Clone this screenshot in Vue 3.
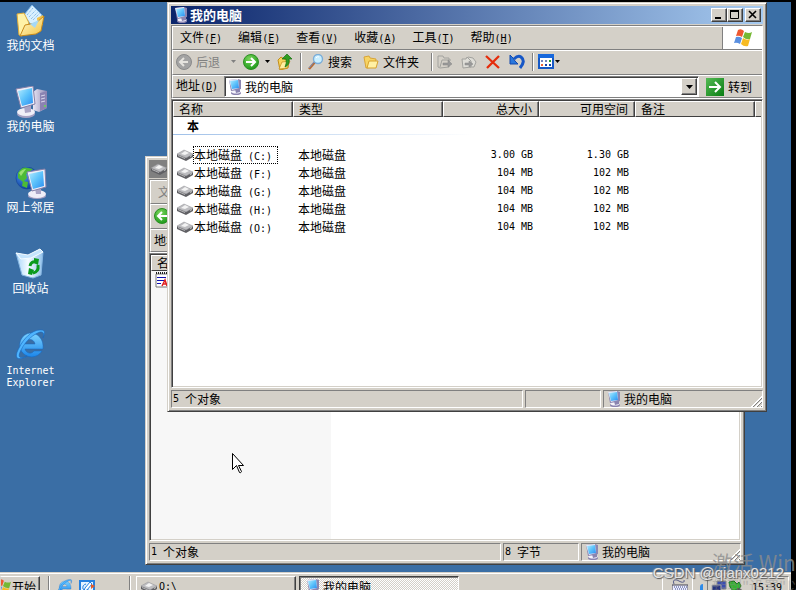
<script setup>
const shortcuts = [
  { icon: 'docs', label: '我的文档' },
  { icon: 'pc', label: '我的电脑' },
  { icon: 'net', label: '网上邻居' },
  { icon: 'bin', label: '回收站' },
  { icon: 'ie', label: 'Internet Explorer', latin: true },
]
const menus = [
  ['文件', 'F'], ['编辑', 'E'], ['查看', 'V'], ['收藏', 'A'], ['工具', 'T'], ['帮助', 'H'],
]
const disks = [
  { letter: 'C', size: '3.00 GB', free: '1.30 GB', focused: true },
  { letter: 'F', size: '104 MB', free: '102 MB' },
  { letter: 'G', size: '104 MB', free: '102 MB' },
  { letter: 'H', size: '104 MB', free: '102 MB' },
  { letter: 'O', size: '104 MB', free: '102 MB' },
]
</script>

<template>
  <svg class="sprite" aria-hidden="true">
    <defs>
      <linearGradient id="gScreen" x1="0" y1="0" x2="1" y2="1">
        <stop offset="0" stop-color="#b4ecff" /><stop offset=".5" stop-color="#5cc2fb" /><stop offset="1" stop-color="#2b8cf0" />
      </linearGradient>
      <linearGradient id="gFolder" x1="0" y1="0" x2="1" y2="1">
        <stop offset="0" stop-color="#fffbd0" /><stop offset="1" stop-color="#f4c445" />
      </linearGradient>
      <linearGradient id="gCase" x1="0" y1="0" x2="1" y2="0">
        <stop offset="0" stop-color="#e8e6f4" /><stop offset="1" stop-color="#9089b4" />
      </linearGradient>
      <linearGradient id="gBin" x1="0" y1="0" x2="1" y2="0">
        <stop offset="0" stop-color="#a8d6fa" /><stop offset=".45" stop-color="#f4fbff" /><stop offset="1" stop-color="#8fc0ea" />
      </linearGradient>
      <linearGradient id="gIe" x1="0" y1="0" x2="0" y2="1">
        <stop offset="0" stop-color="#7ed4ff" /><stop offset="1" stop-color="#1c86ea" />
      </linearGradient>
      <radialGradient id="gGreen" cx=".4" cy=".3" r=".7">
        <stop offset="0" stop-color="#7bd65c" /><stop offset="1" stop-color="#1f9a1c" />
      </radialGradient>
      <radialGradient id="gGlobe" cx=".35" cy=".35" r=".7">
        <stop offset="0" stop-color="#4f9cf0" /><stop offset="1" stop-color="#0a3a9c" />
      </radialGradient>
      <linearGradient id="gGo" x1="0" y1="0" x2="1" y2="1">
        <stop offset="0" stop-color="#55bb55" /><stop offset="1" stop-color="#087c12" />
      </linearGradient>
    </defs>

    <symbol id="docs" viewBox="0 0 32 32">
      <path d="M9 10 17 0l10 10-8 14z" fill="#d9f0ff" stroke="#7cb4e6" />
      <path d="m12 10 6-7m-4 9 7-7m-5 9 7-7m-5 8 7-7" stroke="#74aee2" stroke-dasharray="1 1" />
      <path d="m22 13 6-3v9l-5 6z" fill="#f3c44c" />
      <path d="m2 9 7-1 5 10-7 13-3-1z" fill="#fff2a8" stroke="#e0ac38" />
      <path d="m5 31 5-11 11-2 8-7-3 15-5 3z" fill="url(#gFolder)" stroke="#c98b1b" />
      <path d="m15 19 9-4-4 8z" fill="#a6d8f6" />
    </symbol>
    <symbol id="pc" viewBox="0 0 32 32">
      <path d="m18 6 4-3 10 2v17l-8 4-6-2z" fill="url(#gCase)" />
      <path d="m25 7 7-2v17l-7 3z" fill="#8b83b2" />
      <path d="m26 10 4-1m-4 4 4-1m-4 4 4-1" stroke="#d9d7ec" />
      <circle cx="30" cy="20" r="1" fill="#62e04c" />
      <ellipse cx="11" cy="28" rx="9" ry="4" fill="#a6a1c4" />
      <ellipse cx="11" cy="26" rx="9" ry="4" fill="#f0eff8" />
      <path d="m9 20 7-1v7l-6 1z" fill="#aaa5c6" />
      <path d="m1 3 17-3 2 18-14 4z" fill="#eeeef8" stroke="#8580a8" />
      <path d="m3 5 14-3 1 15-11 3z" fill="url(#gScreen)" />
    </symbol>
    <symbol id="net" viewBox="0 0 32 32">
      <circle cx="12" cy="11" r="11" fill="url(#gGlobe)" stroke="#123f90" stroke-width=".5" />
      <path d="M3 6Q7-1 13 1l5 1-5 4-2 1 1 4-4 4-5-4zM8 14l5 1-1 6-5-2z" fill="#4dbb35" />
      <path d="M4 6q3-4 7-4L8 6l-2 3z" fill="#9ae070" />
      <ellipse cx="22" cy="29" rx="9" ry="3" fill="#a6a1c4" />
      <ellipse cx="22" cy="27" rx="9" ry="4" fill="#efeef8" />
      <path d="m20 21 6-1v7h-5z" fill="#aaa5c6" />
      <path d="m12 5 18-3 1 18-14 4z" fill="#eeeef8" stroke="#8580a8" />
      <path d="m14 7 14-3 1 15-11 3z" fill="url(#gScreen)" />
    </symbol>
    <symbol id="bin" viewBox="0 0 32 32">
      <path d="m1 5 12 3L25 1l3 3-2 23-8 3-11-3z" fill="url(#gBin)" stroke="#86b6e2" />
      <path d="m1 5 12 2L25 1l3 3-12 6-10 1z" fill="#c4e4fd" stroke="#f6fcff" />
      <g fill="none" stroke="#0a9a1c" stroke-width="3">
        <path d="M15 18q1-5 6-4M23 17q1 7-5 8" />
      </g>
      <path d="m19 10 5 1-1 6-4-2zM14 20l5 2-2 5-4-1z" fill="#0a9a1c" />
    </symbol>
    <symbol id="ie" viewBox="0 0 32 32">
      <path d="M15 4a12 12 0 1 0 12 18h-8c-3 4-8 2-9-2h18C29 10 23 4 15 4zm-5 11c1-6 9-6 10 0z" fill="url(#gIe)" fill-rule="evenodd" stroke="#1767be" stroke-width=".5" />
      <path d="M4 19C-1 28 1 33 12 27 3 31 3 27 6 21 11 11 19 5 25 3q5-1 3 6 4-9-3-8C17 1 9 9 4 19z" fill="#4fb5ff" stroke="#1767be" stroke-width=".6" />
    </symbol>
    <symbol id="mon" viewBox="0 0 16 16">
      <ellipse cx="9" cy="14" rx="5" ry="2" fill="#8b84b0" />
      <ellipse cx="9" cy="12.500" rx="4.500" ry="2" fill="#f4f3fb" />
      <path d="m8 10 5-1v4l-4 1z" fill="#8a84b0" />
      <path d="m2 1 9-1 3 1v9l-3 1-7 1z" fill="#8b86b2" />
      <path d="m2 1 9-1 1 9-7 2z" fill="#e9e9f7" />
      <path d="m3 2 8-1 1 8-7 1z" fill="url(#gScreen)" />
    </symbol>
    <symbol id="drive" viewBox="0 0 16 16">
      <path d="M0 7v3l9 4 7-4V7L9 10z" fill="#5f5f63" />
      <path d="m0 7 7-4 9 4-7 4z" fill="#bdbdc0" stroke="#929296" stroke-width=".5" />
      <path d="m4 7 4-3 4 2-4 2z" fill="#f3f3f3" />
      <path d="m1 8 7 3v1L1 9z" fill="#b9b9bb" /><path d="m13 9 2-1v1l-2 1z" fill="#c8ccc7" />
    </symbol>
    <symbol id="back" viewBox="0 0 16 16">
      <circle cx="8" cy="8" r="7.500" fill="#a3a3a3" stroke="#8a8a8a" />
      <path d="M12 8H5m3-4L4 8l4 4" fill="none" stroke="#e6e4df" stroke-width="2" />
    </symbol>
    <symbol id="backon" viewBox="0 0 16 16">
      <circle cx="8" cy="8" r="7.500" fill="url(#gGreen)" stroke="#2c8f22" />
      <path d="M13 8H5m3-4L4 8l4 4" fill="none" stroke="#fff" stroke-width="2" />
    </symbol>
    <symbol id="fwd" viewBox="0 0 16 16">
      <circle cx="8" cy="8" r="7.500" fill="url(#gGreen)" stroke="#2c8f22" />
      <path d="M3 8h8M8 4l4 4-4 4" fill="none" stroke="#fff" stroke-width="2" />
    </symbol>
    <symbol id="up" viewBox="0 0 16 16">
      <path d="m1 6 3-3 3 2 5 1-1 8-8 2z" fill="#f6d45c" stroke="#c48d18" />
      <path d="m2 15 3-7 8-1-3 7z" fill="#ffeea0" stroke="#c48d18" stroke-width=".7" />
      <path d="m5 5 5-5 5 5h-3q1 6-4 8 2-4 1-8z" fill="#2f9d20" stroke="#146f10" stroke-width=".7" />
    </symbol>
    <symbol id="search" viewBox="0 0 16 16">
      <path d="m1 15 6-7" stroke="#b56b35" stroke-width="2.500" /><path d="m1 14 5-6" stroke="#7292c8" />
      <circle cx="10" cy="5" r="4.500" fill="#c9efff" stroke="#7baed9" stroke-width="1.400" />
      <path d="M8 4q1-2 3-1" stroke="#fff" fill="none" />
    </symbol>
    <symbol id="folder" viewBox="0 0 16 16">
      <path d="m1 3 5-1 1 2 6 1-1 8-9 1z" fill="#f7d463" stroke="#d9a436" />
      <path d="m4 14 2-7h9l-2 7z" fill="#fff0a4" stroke="#d8a22d" />
    </symbol>
    <symbol id="move" viewBox="0 0 16 16">
      <path d="M1 2h5l1 2h5v9l-9 1-2-1zM3 13l2-7h9" fill="none" stroke="#a2a29e" />
      <path d="M6 9h5V6l4 4-4 3v-2H6z" fill="#999" stroke="#878787" stroke-width=".5" />
    </symbol>
    <symbol id="copy" viewBox="0 0 16 16">
      <path d="M1 5h4l1-2 4 4v6l-8 1zM7 3l5 1 3 4-2 5H9" fill="#deddd7" stroke="#a2a29e" />
      <path d="M4 9h4V7l4 3-4 3v-2H4z" fill="#999" stroke="#888" stroke-width=".5" />
    </symbol>
    <symbol id="del" viewBox="0 0 16 16">
      <path d="m1 2 13 12M14 2 2 14" stroke="#e52c0b" stroke-width="2.300" />
    </symbol>
    <symbol id="undo" viewBox="0 0 16 16">
      <path d="M5 5q4-4 7-2 5 4-1 11" fill="none" stroke="#1757c6" stroke-width="3" />
      <path d="M1 1v9h8L6 7 4 4z" fill="#2b78dd" stroke="#1249ad" />
    </symbol>
    <symbol id="views" viewBox="0 0 16 16">
      <path d="M1 1h14v13H1z" fill="#fff" stroke="#1659c5" stroke-width="2" />
      <path d="M0 0h16v4H0z" fill="#1768dc" />
      <path d="M3 6h2v2H3zM7 6h2v2H7z" fill="#7383bd" /><path d="M11 6h2v2h-2z" fill="#29a02d" />
      <path d="M3 10h2v2H3z" fill="#ef6336" /><path d="M7 10h2v2H7zM11 10h2v2h-2z" fill="#1544a8" />
    </symbol>
    <symbol id="flag" viewBox="0 0 20 18">
      <path d="M5 1q3-2 6 1L9 8Q6 6 3 7z" fill="#ee5830" />
      <path d="M12 3q4 2 7 0l-2 7q-4 1-7-2z" fill="#76b834" />
      <path d="M3 8q3-1 6 1l-2 6Q4 13 1 14z" fill="#5a8fe0" />
      <path d="M10 9q4 3 7 1l-2 7q-4 1-7-2z" fill="#f7bb22" />
    </symbol>
    <symbol id="go" viewBox="0 0 18 18">
      <path d="M0 0h18v18H0z" fill="url(#gGo)" />
      <path d="M3 9h10M9 4l5 5-5 5" fill="none" stroke="#fff" stroke-width="2" />
    </symbol>
    <symbol id="note" viewBox="0 0 16 16">
      <path d="M1 2h14v13H1z" fill="#fff" stroke="#777" /><path d="M1 1h14" stroke="#222" stroke-width="2" stroke-dasharray="1 1" />
      <path d="M2 5.500h9M2 8.500h8M2 11.500h4" stroke="#1010b0" /><path d="m7 14 3-6 2 6m-4-2h4" fill="none" stroke="#e02020" stroke-width="1.500" />
    </symbol>
    <symbol id="desk" viewBox="0 0 16 16">
      <path d="M1 2h14v13H1z" fill="#e5f3ff" stroke="#2580df" stroke-width="2" />
      <path d="m11 3 2 2-5 6-3 1 1-3z" fill="#fff" stroke="#2580df" />
      <path d="M7 5Q3 6 4 10q2 3 6 1" fill="none" stroke="#2580df" /><path d="m12 5 4 2-4 3z" fill="#e65a26" />
    </symbol>
    <symbol id="kb" viewBox="0 0 16 16">
      <path d="M2 5q-2-5 3-4l4 2q4 1 3-2" fill="none" stroke="#555a88" />
      <path d="M0 6h16v8H0z" fill="#eef" stroke="#445" />
      <path d="M2 8h13M3 10h12M2 12h13" stroke="#334488" stroke-dasharray="1 1" />
    </symbol>
    <symbol id="lan" viewBox="0 0 16 16">
      <path d="M6 1h9v8H6z" fill="#3b4db0" stroke="#888" /><path d="M1 5h9v7H1z" fill="#26337e" stroke="#aaa" /><path d="M3 14h8" stroke="#ddd" stroke-width="2" />
    </symbol>
    <symbol id="plug" viewBox="0 0 16 16">
      <path d="m1 2 5-1 3 3 2-2 2 4-2 3-6 2-3-4z" fill="#35b332" stroke="#147319" /><path d="M9 9q5 0 6 5" fill="none" stroke="#555" stroke-width="2" />
    </symbol>
    <symbol id="tri" viewBox="0 0 5 3"><path d="M0 0h5L2.500 3z" fill="currentColor" /></symbol>
  </svg>

  <div class="screen">
    <main class="workspace">
      <nav class="shortcuts" aria-label="桌面">
        <a v-for="s in shortcuts" :key="s.icon" href="#" class="shortcut">
          <svg class="i32"><use :href="'#' + s.icon" /></svg>
          <span :class="{ lt: s.latin }">{{ s.label }}</span>
        </a>
      </nav>

      <section class="window rear">
        <header class="title"><svg class="i16"><use href="#drive" /></svg></header>
        <div class="rebar">
          <div class="band menu"><button class="menu-item dim">文件</button></div>
          <div class="band tools"><button class="tool" aria-label="后退"><svg class="i16"><use href="#backon" /></svg></button></div>
          <div class="band address"><span class="addr-label">地址</span></div>
        </div>
        <div class="list split">
          <table>
            <thead><tr><th>名称</th></tr></thead>
            <tbody><tr><td class="file"><svg class="i16"><use href="#note" /></svg></td></tr></tbody>
          </table>
        </div>
        <footer class="status">
          <span class="panel grow"><span class="lt">1 </span>个对象</span>
          <span class="panel mid"><span class="lt">8 </span>字节</span>
          <span class="panel zone"><svg class="i16"><use href="#mon" /></svg>我的电脑<i class="grip"></i></span>
        </footer>
      </section>

      <section class="window front">
        <header class="title">
          <svg class="i16"><use href="#mon" /></svg>
          <h1>我的电脑</h1>
          <div class="caption">
            <button aria-label="最小化"><svg viewBox="0 0 12 10"><path d="M2 8h6" stroke="#000" stroke-width="2" /></svg></button>
            <button aria-label="最大化"><svg viewBox="0 0 12 10"><path d="M1.500 1v7.500h8V1" fill="none" stroke="#000" /><path d="M1 1h9" stroke="#000" stroke-width="2" /></svg></button>
            <button class="close" aria-label="关闭"><svg viewBox="0 0 12 10"><path d="m2 1 7 7M9 1 2 8" stroke="#000" stroke-width="1.600" /></svg></button>
          </div>
        </header>
        <div class="rebar">
          <div class="band menu">
            <button v-for="m in menus" :key="m[1]" class="menu-item">{{ m[0] }}<span class="lt">(<u>{{ m[1] }}</u>)</span></button>
            <span class="brand"><svg><use href="#flag" /></svg></span>
          </div>
          <div class="band tools">
            <button class="tool text off"><svg class="i16"><use href="#back" /></svg>后退</button>
            <button class="drop off" aria-label="后退列表"><svg><use href="#tri" /></svg></button>
            <button class="tool" aria-label="前进"><svg class="i16"><use href="#fwd" /></svg></button>
            <button class="drop" aria-label="前进列表"><svg><use href="#tri" /></svg></button>
            <button class="tool" aria-label="向上"><svg class="i16"><use href="#up" /></svg></button>
            <i class="sep"></i>
            <button class="tool text"><svg class="i16"><use href="#search" /></svg>搜索</button>
            <button class="tool text"><svg class="i16"><use href="#folder" /></svg>文件夹</button>
            <i class="sep"></i>
            <div class="group">
              <button class="tool" aria-label="移至"><svg class="i16"><use href="#move" /></svg></button>
              <button class="tool" aria-label="复制到"><svg class="i16"><use href="#copy" /></svg></button>
              <button class="tool" aria-label="删除"><svg class="i16"><use href="#del" /></svg></button>
              <button class="tool" aria-label="撤消"><svg class="i16"><use href="#undo" /></svg></button>
            </div>
            <i class="sep"></i>
            <button class="tool views" aria-label="查看"><svg class="i16"><use href="#views" /></svg><svg class="tri"><use href="#tri" /></svg></button>
          </div>
          <div class="band address">
            <label class="addr-label" for="addr">地址<span class="lt">(<u>D</u>)</span></label>
            <div class="combo">
              <svg class="i16"><use href="#mon" /></svg>
              <input id="addr" type="text" value="我的电脑" />
              <button aria-label="展开"><svg viewBox="0 0 7 4"><path d="M0 0h7L3.500 4z" /></svg></button>
            </div>
            <button class="go"><svg><use href="#go" /></svg>转到</button>
          </div>
        </div>
        <div class="list">
          <table>
            <colgroup><col class="c-name" /><col class="c-type" /><col class="c-size" /><col class="c-size" /><col class="c-name" /><col /></colgroup>
            <thead><tr><th>名称</th><th>类型</th><th class="num">总大小</th><th class="num">可用空间</th><th>备注</th><th class="rest"></th></tr></thead>
            <tbody>
              <tr><td colspan="6" class="group-cell"><div class="group-name">本</div></td></tr>
              <tr v-for="d in disks" :key="d.letter">
                <td>
                  <div class="name">
                    <svg class="i16"><use href="#drive" /></svg>
                    <span class="label" :class="{ focused: d.focused }">本地磁盘<span class="lt"> ({{ d.letter }}:)</span></span>
                  </div>
                </td>
                <td class="type">本地磁盘</td>
                <td class="num lt">{{ d.size }}</td>
                <td class="num lt">{{ d.free }}</td>
                <td></td><td></td>
              </tr>
            </tbody>
          </table>
        </div>
        <footer class="status">
          <span class="panel grow"><span class="lt">5 </span>个对象</span>
          <span class="panel mid"></span>
          <span class="panel zone"><svg class="i16"><use href="#mon" /></svg>我的电脑<i class="grip"></i></span>
        </footer>
      </section>

      <svg class="cursor" viewBox="0 0 12 21"><path d="M.5.5v16l4-4 3 7q1 1 2-1l-3-6h5z" fill="#fff" stroke="#000" /></svg>
    </main>

    <footer class="taskbar">
      <button class="start"><svg><use href="#flag" /></svg>开始</button>
      <div class="quick">
        <button aria-label="Internet Explorer"><svg class="i16"><use href="#ie" /></svg></button>
        <button aria-label="显示桌面"><svg class="i16"><use href="#desk" /></svg></button>
      </div>
      <button class="task"><svg class="i16"><use href="#drive" /></svg><span class="lt">O:\</span></button>
      <button class="task active"><svg class="i16"><use href="#mon" /></svg>我的电脑</button>
      <div class="lang"><svg class="i16"><use href="#kb" /></svg></div>
      <i class="nub"></i>
      <div class="tray">
        <svg class="i16"><use href="#lan" /></svg>
        <svg class="i16"><use href="#plug" /></svg>
        <time class="lt">15:39</time>
      </div>
    </footer>

    <div class="activate"><p>激活 Win</p><p class="small">转到"设置"以</p></div>
    <div class="credit">CSDN @qianx0212</div>
  </div>
</template>

<style>
body { margin: 0; background: #000; }
</style>

<style scoped>
.sprite { position: absolute; width: 0; height: 0; }
.screen {
  position: relative; box-sizing: border-box; height: 100vh; padding: 2px 5px 0 0; overflow: hidden;
  display: flex; flex-direction: column; color: #000; background: #000;
  font: 12px/16px "Noto Sans CJK SC", sans-serif; white-space: nowrap;
}
.screen * { box-sizing: border-box; }
svg { display: block; flex: none; }
button, input { font: inherit; color: inherit; margin: 0; padding: 0; border: 0; background: none; border-radius: 0; }
.lt { font-family: "DejaVu Sans Mono", monospace; font-size: 10px; white-space: pre; }
.i16 { width: 16px; height: 16px; }
.i32 { width: 32px; height: 32px; }

.workspace { position: relative; flex: 1; min-height: 0; background: #3a6ea5; overflow: hidden; }
.shortcuts { width: 61px; padding-top: 3px; display: grid; grid-auto-rows: 81px; }
.shortcut { display: flex; flex-direction: column; align-items: center; color: #fff; text-decoration: none; }
.shortcut .lt { white-space: normal; text-align: center; line-height: 12px; padding-top: 4px; }

.window {
  position: absolute; display: flex; flex-direction: column; padding: 3px; background: #d4d0c8;
  border: 1px solid; border-color: #d4d0c8 #404040 #404040 #d4d0c8;
  box-shadow: inset 1px 1px #fff, inset -1px -1px #808080;
}
.front { inset: 0 24px 160px 167px; }
.rear { inset: 154px 46px 7px 145px; }
.title {
  height: 18px; margin-bottom: 1px; padding: 0 2px; display: flex; align-items: center; gap: 1px;
  color: #fff; background: linear-gradient(90deg, #0a246a, #a6caf0);
}
.rear .title { background: #808080; }
.title h1 { flex: 1; margin: 0; font-size: 13px; line-height: 16px; font-weight: 700; }
.caption { display: flex; }
.caption button, .combo button {
  width: 16px; height: 14px; background: #d4d0c8; border: 1px solid; border-color: #fff #404040 #404040 #fff;
  box-shadow: inset -1px -1px #808080;
}
.caption svg { width: 12px; height: 10px; margin: 0 1px; }
.caption .close { margin-left: 2px; }

.rebar { border: 1px solid; border-color: #808080 #fff #fff #808080; }
.band { display: flex; align-items: center; border-top: 1px solid #fff; border-bottom: 1px solid #808080; border-left: 1px solid #fff; }
.menu { height: 24px; }
.menu-item { height: 22px; padding: 0 8px; }
.menu .menu-item:first-child { padding-left: 7px; }
.dim { color: #808080; }
.brand { align-self: stretch; width: 40px; margin-left: auto; background: #fff; border-left: 1px solid #808080; display: grid; place-items: center; }
.brand svg { width: 20px; height: 18px; }
.tools { height: 25px; padding-bottom: 2px; }
.tool { height: 22px; padding: 0 3px; display: flex; align-items: center; gap: 4px; }
.text { padding-right: 8px; }
.off { color: #808080; }
.drop { width: 12px; height: 22px; padding-left: 3px; }
.drop svg, .tri { width: 5px; height: 3px; }
.views { gap: 1px; padding-left: 1px; }
.group { display: flex; gap: 2px; margin-left: -2px; }
.sep { width: 2px; height: 18px; margin: 0 3px 0 4px; border-left: 1px solid #808080; border-right: 1px solid #fff; }
.address { height: 23px; }
.addr-label { width: 51px; padding: 0 0 2px 3px; }
.combo {
  flex: 1; height: 21px; display: flex; align-items: center; background: #fff; padding: 1px 1px 1px 2px;
  border: 1px solid; border-color: #808080 #fff #fff #808080; box-shadow: inset 1px 1px #404040;
}
.combo input { flex: 1; min-width: 0; height: 17px; padding-left: 2px; outline: 0; }
.combo button { height: 17px; display: grid; place-items: center; }
.combo button svg { width: 7px; height: 4px; }
.go { width: 63px; padding-left: 7px; display: flex; align-items: center; gap: 4px; }
.go svg { width: 18px; height: 18px; }

.list {
  flex: 1; min-height: 0; overflow: hidden; background: #fff; border: 1px solid; border-color: #808080 #fff #fff #808080;
  box-shadow: inset 1px 1px #404040, inset -1px -1px #d4d0c8; padding: 1px; margin-bottom: 2px;
}
.split { background: linear-gradient(90deg, #f7f7f7 181px, #fff 181px); }
table { width: 100%; table-layout: fixed; border-collapse: separate; border-spacing: 0; }
.c-name { width: 120px; }
.c-type { width: 150px; }
.c-size { width: 96px; }
th {
  height: 16px; padding: 0 5px; font-weight: 400; text-align: left; line-height: 14px; background: #d4d0c8;
  border: 1px solid; border-color: #fff #404040 #404040 #fff; box-shadow: inset -1px 0 #808080;
}
th.rest { border-right: 0; box-shadow: none; }
td { height: 18px; padding: 0; line-height: 16px; }
.num { text-align: right; padding-right: 6px; }
td.num { line-height: 18px; }
.type { padding-left: 5px; }
.group-cell { height: 29px; vertical-align: top; }
.group-name {
  height: 18px; padding-left: 14px; font-weight: 700; line-height: 17px;
  background: linear-gradient(90deg, #9fc0e8, #fff) no-repeat left bottom / 300px 1px;
}
.name { display: flex; align-items: center; padding-left: 4px; }
.label { padding: 0 5px 0 0; border: 1px dotted transparent; height: 18px; }
.focused { border-color: #000; }
.file { padding-left: 4px; }

.status { height: 18px; display: flex; gap: 2px; }
.panel { position: relative; display: flex; align-items: center; padding-left: 1px; border: 1px solid; border-color: #808080 #fff #fff #808080; }
.grow { flex: 1; }
.mid { width: 76px; }
.zone { width: 160px; padding-left: 2px; gap: 2px; }
.grip {
  position: absolute; right: 0; bottom: 0; width: 12px; height: 12px;
  background: repeating-linear-gradient(135deg, #fff 0 1px, #808080 1px 2px, #d4d0c8 2px 3px);
  clip-path: polygon(100% 0, 100% 100%, 0 100%);
}
.cursor { position: absolute; left: 232px; top: 451px; width: 12px; height: 21px; }

.taskbar { height: 18px; flex: none; overflow: hidden; display: flex; align-items: flex-start; padding-top: 4px; background: #d4d0c8; box-shadow: inset 0 1px #d4d0c8, inset 0 2px #fff; }
.taskbar button { display: flex; align-items: center; }
.start { width: 40px; height: 22px; border: 1px solid; border-color: #fff #404040 #404040 #d4d0c8; box-shadow: inset -1px -1px #808080; overflow: hidden; justify-content: flex-end; }
.taskbar .start { padding-right: 3px; }
.start svg { width: 18px; height: 16px; }
.quick { display: flex; align-items: center; gap: 6px; width: 83px; height: 22px; margin: 0 5px 0 8px; padding-left: 8px; border-left: 1px solid #808080; border-right: 1px solid #fff; box-shadow: inset 1px 0 #fff, inset -1px 0 #808080; }
.taskbar .task { width: 160px; height: 22px; padding-left: 4px; gap: 2px; margin-right: 3px; border: 1px solid; border-color: #fff #404040 #404040 #fff; box-shadow: inset -1px -1px #808080; }
.taskbar .active {
  border-color: #404040 #fff #fff #404040; box-shadow: inset 1px 1px #808080;
  background: repeating-conic-gradient(#fff 0 25%, #d4d0c8 0 50%) 0 0 / 2px 2px; padding-left: 5px;
}
.lang { width: 31px; height: 22px; margin-left: auto; padding: 3px 0 0 9px; border-left: 1px solid #fff; border-right: 1px solid #fff; }
.nub { width: 3px; height: 10px; margin: 8px 4px 0 7px; background: #2f8be8; border-radius: 3px 0 0 0; }
.tray { width: 82px; height: 22px; margin-right: 2px; padding: 3px 0 0 3px; display: flex; gap: 1px; border: 1px solid; border-color: #808080 #fff #fff #808080; }
.tray time { margin-left: 7px; }

.activate { position: absolute; left: 712px; right: 0; top: 548px; bottom: 0; overflow: hidden; color: #8c8c8ccc; pointer-events: none; }
.activate p { margin: 0; font-size: 21px; line-height: 28px; }
.activate .small { font-size: 15px; line-height: 20px; opacity: .5; }
.credit { position: absolute; right: 12px; bottom: 8px; color: #e4e4e4; font: 15px/18px "Liberation Sans", sans-serif; text-shadow: 1px 1px 1px #555, -1px 0 1px #888; pointer-events: none; }
</style>
